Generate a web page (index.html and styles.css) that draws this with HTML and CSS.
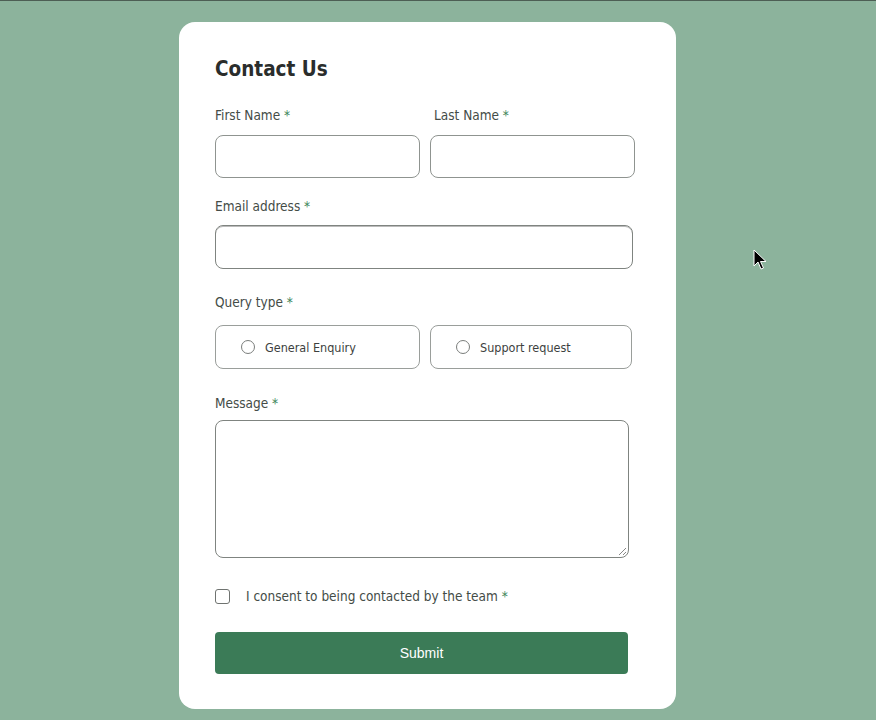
FILE: index.html
```html
<!DOCTYPE html>
<html lang="en">
<head>
<meta charset="utf-8">
<title>Contact Us</title>
<link rel="stylesheet" href="styles.css">
</head>
<body>
<main class="card">
  <h1 class="title">Contact Us</h1>
  <form class="form">
    <div class="row two">
      <div class="field">
        <label class="label">First Name <span class="req">*</span></label>
        <div class="input"></div>
      </div>
      <div class="field">
        <label class="label shifted">Last Name <span class="req">*</span></label>
        <div class="input"></div>
      </div>
    </div>
    <div class="field email">
      <label class="label">Email address <span class="req">*</span></label>
      <div class="input wide"></div>
    </div>
    <div class="field query">
      <label class="label">Query type <span class="req">*</span></label>
      <div class="radios">
        <div class="radio-box first"><span class="radio"></span><span class="radio-text">General Enquiry</span></div>
        <div class="radio-box second"><span class="radio"></span><span class="radio-text">Support request</span></div>
      </div>
    </div>
    <div class="field message">
      <label class="label">Message <span class="req">*</span></label>
      <div class="textarea">
        <svg class="grip" width="10" height="10" viewBox="0 0 10 10"><path d="M9 2 L2 9 M9 6 L6 9" stroke="#888" stroke-width="1" fill="none"/></svg>
      </div>
    </div>
    <div class="consent">
      <span class="checkbox"></span>
      <span class="consent-text">I consent to being contacted by the team <span class="req">*</span></span>
    </div>
    <div class="submit">Submit</div>
  </form>
</main>
<svg class="cursor" width="14" height="22" viewBox="0 0 14 22"><path d="M1 1 L1 17 L5 13 L8 20 L10.5 19 L7.5 12.5 L13 12.5 Z" fill="#000" stroke="#fff" stroke-width="1"/></svg>
</body>
</html>
```
FILE: styles.css
```css
* { box-sizing: border-box; }
html, body { margin: 0; padding: 0; }
body {
  background: #8cb39c;
  border-top: 1px solid #4d5e54;
  height: 720px;
  overflow: hidden;
  font-family: "DejaVu Sans Condensed", "DejaVu Sans", sans-serif;
  font-stretch: condensed;
  color: #3c4641;
  position: relative;
}
.card {
  margin: 21px 0 0 179px;
  width: 497px;
  height: 687px;
  background: #fff;
  border-radius: 16px;
  padding: 33px 36px 0 36px;
}
.title {
  margin: 0;
  font-size: 20.5px;
  line-height: 28px;
  font-weight: bold;
  color: #2a2d2c;
}
.form { display: flex; flex-direction: column; margin-top: 23px; }
.row.two { display: flex; gap: 10px; }
.field { display: flex; flex-direction: column; }
.label {
  font-size: 13.5px;
  line-height: 18px;
  color: #444c47;
}
.label.shifted { padding-left: 4px; }
.req { color: #3b8558; }
.input {
  margin-top: 11px;
  width: 205px;
  height: 43px;
  border: 1px solid #8f9490;
  border-radius: 8px;
}
.email { margin-top: 19px; }
.email .input { margin-top: 10px; width: 418px; height: 44px; border-color: #7f8480; box-shadow: inset 0 1px 0 #bbb; }
.query { margin-top: 24px; }
.radios { display: flex; gap: 10px; margin-top: 14px; }
.radio-box {
  height: 44px;
  border: 1px solid #9a9e9b;
  border-radius: 8px;
  display: flex;
  align-items: center;
  padding-left: 25px;
}
.radio-box.first { width: 205px; }
.radio-box.second { width: 202px; padding-left: 25px; }
.radio {
  width: 14px;
  height: 14px;
  border: 1px solid #7a7d7b;
  border-radius: 50%;
  margin-right: 10px;
  flex: none;
}
.radio-text { font-size: 12.5px; color: #3d3f3e; }
.message { margin-top: 25px; }
.textarea {
  margin-top: 8px;
  width: 414px;
  height: 138px;
  border: 1px solid #7f8480;
  border-radius: 8px;
  position: relative;
}
.grip { position: absolute; right: 1px; bottom: 1px; }
.consent {
  margin-top: 29px;
  display: flex;
  align-items: center;
  height: 18px;
}
.checkbox {
  width: 15px;
  height: 15px;
  border: 1px solid #6f7370;
  border-radius: 3px;
  margin-right: 16px;
  flex: none;
}
.consent-text { font-size: 13.5px; color: #444c47; }
.submit {
  margin-top: 27px;
  width: 413px;
  height: 42px;
  background: #3b7b57;
  border-radius: 4px;
  color: #fff;
  font-family: "Liberation Sans", Arial, sans-serif;
  font-stretch: normal;
  font-size: 14px;
  display: flex;
  align-items: center;
  justify-content: center;
}
.cursor { position: absolute; left: 753px; top: 248px; }
```
